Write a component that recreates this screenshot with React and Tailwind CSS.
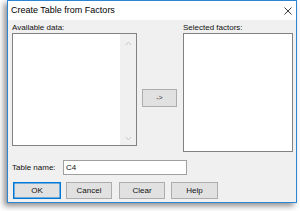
import React from "react";

const ui = { fontFamily: '"Liberation Sans", Arial, sans-serif' };

const Chevron = ({ up }) => (
  <svg width="7" height="5" viewBox="0 0 7 5" className="block">
    <path
      d={up ? "M0.8 4 L3.5 1.2 L6.2 4" : "M0.8 1 L3.5 3.8 L6.2 1"}
      fill="none"
      stroke="#c4c4c4"
      strokeWidth="1"
    />
  </svg>
);

const Button = ({ children, width, primary }) => (
  <button
    className={`h-[17px] ${width} flex items-center justify-center bg-[#e1e1e1] text-[8px] text-[#111] border ${
      primary ? "border-[#0078d7] shadow-[inset_0_0_0_0.5px_#0078d7]" : "border-[#adadad]"
    }`}
  >
    {children}
  </button>
);

export default function App() {
  return (
    <div className="w-[300px] h-[211px] bg-white pl-[7px] overflow-hidden" style={ui}>
      <div className="w-[290px] h-[203px] border border-[#2b87d3] bg-[#f0f0f0] flex flex-col shadow-[-3px_3px_6px_rgba(0,0,0,0.45)]">
        {/* title bar */}
        <div className="h-[19px] bg-white flex items-center justify-between pl-[3px] pr-[4px]">
          <span className="text-[9px] text-black leading-none">Create Table from Factors</span>
          <svg width="8" height="8" viewBox="0 0 8 8">
            <path d="M0.5 0.5 L7.5 7.5 M7.5 0.5 L0.5 7.5" stroke="#222" strokeWidth="0.9" />
          </svg>
        </div>

        {/* lists */}
        <div className="flex pl-[4px] pt-[2px]">
          <div className="flex flex-col">
            <div className="h-[11px] text-[8px] leading-[11px] text-[#111]">Available data:</div>
            <div className="w-[125px] h-[113px] border border-[#828282] bg-white flex justify-end">
              <div className="w-[16px] h-full bg-[#f0f0f0] flex flex-col items-center justify-between pt-[7px] pb-[4px]">
                <Chevron up />
                <Chevron />
              </div>
            </div>
          </div>
          <div className="ml-[5px] pt-[67px]">
            <button className="w-[35px] h-[18px] bg-[#e1e1e1] border border-[#adadad] text-[7px] text-[#333] flex items-center justify-center">
              -&gt;
            </button>
          </div>
          <div className="ml-[6px] flex flex-col">
            <div className="h-[11px] text-[8px] leading-[11px] text-[#111]">Selected factors:</div>
            <div className="w-[110px] h-[119px] border border-[#828282] bg-white" />
          </div>
        </div>

        {/* table name */}
        <div className="flex items-center pl-[4px] mt-[8px]">
          <span className="w-[51px] text-[8px] text-[#111]">Table name:</span>
          <div className="w-[124px] h-[15px] border border-[#a0a0a0] bg-white flex items-center pl-[2px] text-[8px] text-[#111]">
            C4
          </div>
        </div>

        {/* buttons */}
        <div className="flex pl-[5px] mt-[7px]">
          <Button width="w-[48px]" primary>OK</Button>
          <div className="ml-[5px]">
            <Button width="w-[46px]">Cancel</Button>
          </div>
          <div className="ml-[7px]">
            <Button width="w-[46px]">Clear</Button>
          </div>
          <div className="ml-[6px]">
            <Button width="w-[47px]">Help</Button>
          </div>
        </div>
      </div>
    </div>
  );
}
